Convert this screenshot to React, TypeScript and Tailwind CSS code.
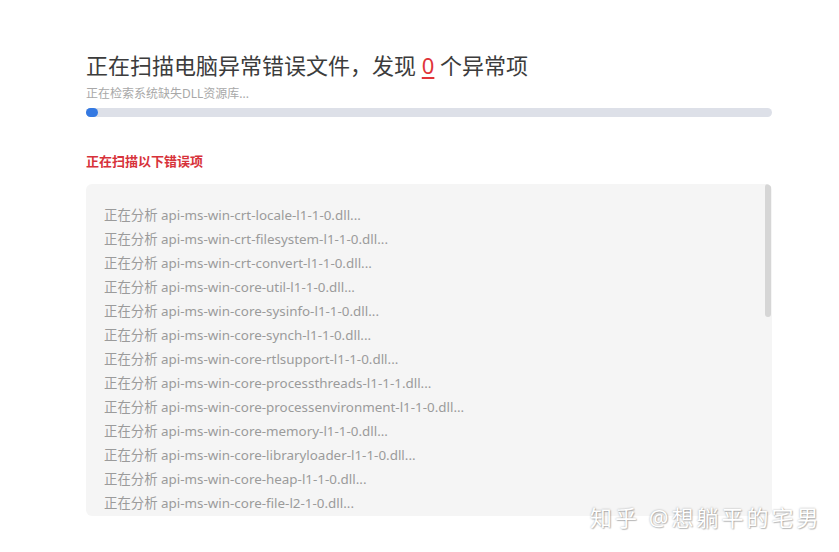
import React from "react";

const files = [
  "api-ms-win-crt-locale-l1-1-0.dll...",
  "api-ms-win-crt-filesystem-l1-1-0.dll...",
  "api-ms-win-crt-convert-l1-1-0.dll...",
  "api-ms-win-core-util-l1-1-0.dll...",
  "api-ms-win-core-sysinfo-l1-1-0.dll...",
  "api-ms-win-core-synch-l1-1-0.dll...",
  "api-ms-win-core-rtlsupport-l1-1-0.dll...",
  "api-ms-win-core-processthreads-l1-1-1.dll...",
  "api-ms-win-core-processenvironment-l1-1-0.dll...",
  "api-ms-win-core-memory-l1-1-0.dll...",
  "api-ms-win-core-libraryloader-l1-1-0.dll...",
  "api-ms-win-core-heap-l1-1-0.dll...",
  "api-ms-win-core-file-l2-1-0.dll...",
];

const App = () => {
  return (
    <div
      className="relative w-[839px] h-[552px] bg-white overflow-hidden"
      style={{ fontFamily: '"Noto Sans", "Noto Sans CJK SC", sans-serif' }}
    >
      <div className="flex flex-col pl-[86px] pr-[67px] pt-[49px]">
        <h1 className="text-[22px] leading-[32px] text-[#3c3c3c]">
          正在扫描电脑异常错误文件，发现{" "}
          <span className="text-[#e0343a] underline underline-offset-[3px]">0</span>{" "}
          个异常项
        </h1>
        <p className="mt-[5px] text-[12px] leading-[16px] text-[#a8a8a8]">
          正在检索系统缺失DLL资源库...
        </p>
        <div className="mt-[6px] h-[9px] w-full rounded-full bg-[#dde0e8]">
          <div className="h-[9px] w-[12px] rounded-full bg-[#3479e2]" />
        </div>

        <h2 className="mt-[35px] text-[13px] leading-[18px] font-bold text-[#d7323a]">
          正在扫描以下错误项
        </h2>

        <div className="relative mt-[14px] h-[332px] rounded-[6px] bg-[#f5f5f5] overflow-hidden">
          <ul className="flex flex-col pl-[18px] pt-[19px]">
            {files.map((f) => (
              <li key={f} className="text-[13.4px] leading-[24px] text-[#9b9b9b]">
                正在分析 {f}
              </li>
            ))}
          </ul>
          <div className="absolute right-[1px] top-0 h-[133px] w-[6px] rounded-full bg-[#d6d6d6]" />
        </div>
      </div>

      <div
        className="absolute left-[590px] top-[502px] text-[22px] leading-[30px] text-white tracking-[3px]"
        style={{ textShadow: "0 0 2px rgba(0,0,0,0.35), 1px 1px 1px rgba(0,0,0,0.2)" }}
      >
        知乎 @想躺平的宅男
      </div>
    </div>
  );
};

export default App;
